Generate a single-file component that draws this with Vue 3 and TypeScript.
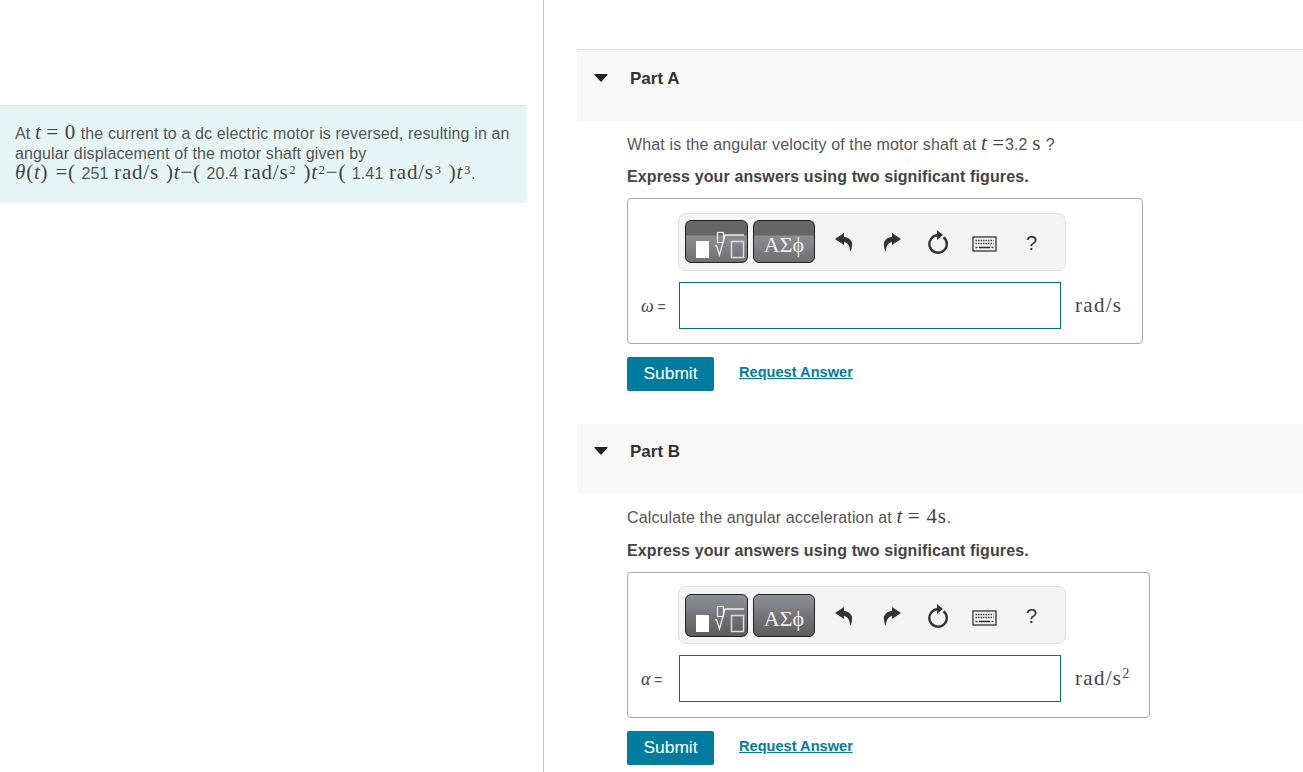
<script setup lang="ts">
interface Part {
  id: string
  title: string
  symbol: string
  unit: string
  sup?: string
  toolbar: string
}

const parts: Part[] = [
  { id: 'a', title: 'Part A', symbol: 'ω', unit: 'rad/s', toolbar: 'flat' },
  { id: 'b', title: 'Part B', symbol: 'α', unit: 'rad/s', sup: '2', toolbar: 'soft' }
]
</script>

<template>
  <div class="page">
    <aside class="left">
      <div class="problem">
        <p>At <i class="m">t</i> <span class="m">= 0</span> the current to a dc electric motor is reversed, resulting in an</p>
        <p>angular displacement of the motor shaft given by</p>
        <p class="formula">
          <span class="m"><i>θ</i>(<i>t</i>) =(</span> 251 <span class="m">rad/s )<i>t</i>−(</span> 20.4 <span class="m">rad/s<sup>2</sup> )<i>t</i><sup>2</sup>−(</span> 1.41 <span class="m">rad/s<sup>3</sup> )<i>t</i><sup>3</sup></span>.
        </p>
      </div>
    </aside>

    <main class="right">
      <section v-for="part in parts" :key="part.id" class="part" :class="part.id">
        <header class="part-head">
          <svg class="caret" width="14" height="8" viewBox="0 0 14 8"><path d="M1 0h12q1 0 .5 1L7.500 7.500q-.5.5-1 0L.5 1Q0 0 1 0z" fill="#222" /></svg>
          <h2>{{ part.title }}</h2>
        </header>

        <div class="part-body">
          <p v-if="part.id === 'a'" class="question">
            What is the angular velocity of the motor shaft at <i class="m">t</i> <span class="m">=</span>3.2 <span class="m">s</span> ?
          </p>
          <p v-else class="question">
            Calculate the angular acceleration at <i class="m">t</i> <span class="m">= 4s</span>.
          </p>
          <p class="hint">Express your answers using two significant figures.</p>

          <div class="answer">
            <div class="toolbar">
              <button class="tool wide" :class="part.toolbar">
                <svg width="63" height="43" viewBox="0 0 63 43" fill="none">
                  <rect x="11" y="21" width="13" height="17" fill="#fff" />
                  <rect x="32.500" y="12.500" width="6" height="10" stroke="#eee" stroke-width="1.200" />
                  <path d="M30 26l1.500-.5L34.500 35 40 15h19" stroke="#eee" stroke-width="1.300" />
                  <rect x="46.500" y="21.500" width="12" height="16" stroke="#ddd" stroke-width="1.500" />
                </svg>
              </button>
              <button class="tool greek" :class="part.toolbar">ΑΣϕ</button>
              <svg class="ico undo" width="20" height="22" viewBox="0 0 20 22">
                <path d="M1 8l9-6v4c5 0 9 4 8 9q0 3-2 6c0-4-1-9-6-10v3z" fill="#333" />
              </svg>
              <svg class="ico redo" width="20" height="22" viewBox="0 0 20 22">
                <path d="M19 8l-9-6v4c-5 0-9 4-8 9q0 3 2 6c0-4 1-9 6-10v3z" fill="#333" />
              </svg>
              <svg class="ico reset" width="22" height="24" viewBox="0 0 22 24" fill="none">
                <path d="M11 5.300A8.700 8.700 0 1 0 16.500 7.200" stroke="#333" stroke-width="2.400" />
                <path d="M10 0l6 5-6 5z" fill="#333" />
              </svg>
              <svg class="ico keys" width="25" height="16" viewBox="0 0 25 16" fill="none">
                <rect x="1" y="1" width="23" height="14" stroke="#333" stroke-width="1.300" fill="#f4f4f4" />
                <path d="M3.500 4.500h18M3.500 7.500h18" stroke="#444" stroke-width="1.500" stroke-dasharray="1.500 1" />
                <path d="M7 11.500h11" stroke="#333" stroke-width="1.600" />
                <path d="M3.500 11.500h2M19.500 11.500h2" stroke="#444" stroke-width="1.500" />
              </svg>
              <span class="help">?</span>
            </div>

            <label class="symbol"><i class="m">{{ part.symbol }}</i> =</label>
            <input class="field" type="text" />
            <span class="unit m">{{ part.unit }}<sup v-if="part.sup">{{ part.sup }}</sup></span>
          </div>

          <div class="actions">
            <button class="submit">Submit</button>
            <a class="reveal" href="#">Request Answer</a>
          </div>
        </div>
      </section>
    </main>
  </div>
</template>

<style>
html, body {
  margin: 0;
  height: 100%;
  overflow: hidden;
}
</style>

<style scoped>
.page {
  display: flex;
  height: 772px;
  font-family: "Liberation Sans", Arial, sans-serif;
  font-size: 16px;
  color: #555;
  background: #fff;
}

.left {
  width: 543px;
  padding: 105px 16px 0 0;
  box-sizing: border-box;
  flex: none;
}

.problem {
  border-top: 1px solid #dde3e5;
  background: #e5f5f6;
  padding: 18px 0 19px 15px;
  height: 98px;
  box-sizing: border-box;
  line-height: 20px;
  letter-spacing: 0.13px;
}

.problem p {
  margin: 0;
  white-space: nowrap;
}

.problem .formula {
  word-spacing: 1px;
}

.formula sup {
  font-size: 58%;
  padding-left: 1px;
  letter-spacing: 0.800px;
  vertical-align: 0.42em;
}

.m {
  font-family: "Liberation Serif", "Times New Roman", serif;
  font-size: 21px;
  letter-spacing: 0.800px;
  color: #444;
  line-height: 0;
}

.m i {
  font-style: italic;
}

sup {
  font-size: 68%;
  line-height: 0;
  letter-spacing: 0;
  vertical-align: 0.5em;
}

.right {
  flex: 1;
  border-left: 1px solid #ccc;
  padding: 49px 0 0 33px;
  min-width: 0;
}

.part.a {
  border-top: 1px solid #e2e2e2;
}

.part-head {
  display: flex;
  align-items: flex-start;
  height: 71px;
  padding: 19px 0 0 17px;
  box-sizing: border-box;
  background: #f8f8f8;
}

.part.b .part-head {
  height: 70px;
  padding-top: 18px;
}

.caret {
  margin-top: 5px;
}

.part-head h2 {
  margin: 0 0 0 22px;
  font-size: 17px;
  line-height: 20px;
  font-weight: 700;
  color: #333;
}

.part-body {
  padding: 14px 0 33px 50px;
}

.question {
  margin: 0;
  line-height: 20px;
  letter-spacing: 0.14px;
}

.hint {
  margin: 12px 0 11px;
  line-height: 20px;
  font-weight: 700;
  color: #444;
  letter-spacing: 0.12px;
}

.part.b .hint {
  margin-top: 13px;
}

.answer {
  display: inline-grid;
  grid-template-columns: 51px 382px auto;
  grid-template-rows: 58px 47px;
  row-gap: 11px;
  align-items: center;
  padding: 14px 20px 14px 0;
  border: 1px solid #aaa;
  border-radius: 4px;
  vertical-align: top;
}

.part.b .answer {
  padding-top: 13px;
  padding-bottom: 15px;
}

.toolbar {
  grid-column: 2 / span 2;
  justify-self: start;
  margin-left: -1px;
  width: 388px;
  height: 58px;
  box-sizing: border-box;
  display: flex;
  align-items: center;
  padding-left: 6px;
  border: 1px solid #dedede;
  border-radius: 8px;
  background: #f4f4f4;
  position: relative;
}

.tool {
  height: 43px;
  padding: 0;
  border: 1px solid #222;
  border-radius: 6px;
  display: block;
  box-sizing: border-box;
  flex: none;
  margin-top: -1px;
}

.part.b .tool {
  margin-top: 1px;
}

.tool svg {
  display: block;
  margin: -1px;
}

.tool.wide {
  width: 63px;
  margin-right: 5px;
}

.tool.greek {
  width: 62px;
  margin-right: 19px;
  font-family: "Liberation Serif", serif;
  font-size: 22px;
  color: #eee;
  padding-top: 6px;
}

.tool.flat {
  background: linear-gradient(#666 0, #666 14px, #8c8c92 15px, #707074 100%);
}

.tool.soft {
  background: linear-gradient(#8e8e96, #5c5c5c);
}

.ico {
  flex: none;
  display: block;
}

.part.b .undo,
.part.b .redo,
.part.b .reset {
  margin-top: 2px;
}

.redo {
  margin-left: 28px;
}

.reset {
  margin-left: 25px;
}

.keys {
  margin-left: 23px;
  margin-top: 4px;
}

.part.b .keys {
  margin-top: 6px;
}

.help {
  margin-left: 29px;
  font-size: 20px;
  color: #333;
  margin-top: 2px;
}

.symbol {
  padding-left: 13px;
  padding-top: 2px;
  font-size: 14px;
  white-space: nowrap;
}

.symbol .m {
  font-size: 18px;
  letter-spacing: 0;
}

.field {
  width: 382px;
  height: 47px;
  box-sizing: border-box;
  border: 1px solid #00708f;
  background: #fff;
  outline: none;
  padding: 0 6px;
}

.unit {
  margin-left: 14px;
  margin-bottom: 2px;
  white-space: nowrap;
  line-height: 20px;
  letter-spacing: 1.300px;
}

.actions {
  display: flex;
  align-items: center;
  margin-top: 13px;
}

.submit {
  width: 87px;
  height: 34px;
  padding: 0 0 2px;
  border: 0;
  border-radius: 2px;
  background: #007c9e;
  color: #fff;
  font-family: inherit;
  font-size: 17.400px;
  font-weight: 400;
}

.reveal {
  margin-left: 25px;
  margin-bottom: 4px;
  font-size: 14.600px;
  font-weight: 700;
  color: #007c9e;
}
</style>
